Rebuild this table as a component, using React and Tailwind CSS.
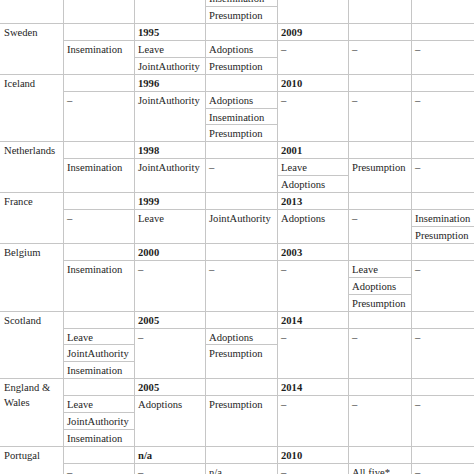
import React from "react";

const SPAN = { 1: "", 2: "row-span-2", 3: "row-span-3", 4: "row-span-4" };

function C({ t = "", s = 1, b = false, first = false }) {
  return (
    <div
      className={`bg-white overflow-hidden pt-px ${first ? "pl-[4px] pr-[2px] whitespace-normal leading-[15px] pt-[1.5px]" : "pl-[3px] whitespace-nowrap"} ${SPAN[s]} ${b ? "font-bold" : ""}`}
    >
      {t}
    </div>
  );
}

function YearRow({ name, span, y1, y2 }) {
  return (
    <>
      <C t={name} s={span} first />
      <C />
      <C t={y1} b />
      <C />
      <C t={y2} b />
      <C />
      <C />
    </>
  );
}

export default function App() {
  return (
    <div className="w-[474px] h-[474px] overflow-hidden bg-white">
      <div
        className="grid grid-cols-[63px_70px_70px_71px_70px_62px_80px] auto-rows-[15.93px] gap-px bg-[#c6c6c6] mt-[-9.93px] text-[10.6px] leading-[16px] text-[#1e1e1e]"
        style={{ fontFamily: '"Liberation Serif", "Times New Roman", serif' }}
      >
        {/* previous block tail */}
        <C s={2} first />
        <C s={2} />
        <C s={2} />
        <C t="Insemination" />
        <C s={2} />
        <C s={2} />
        <C s={2} />
        <C t="Presumption" />

        {/* Sweden */}
        <YearRow name="Sweden" span={3} y1="1995" y2="2009" />
        <C t="Insemination" s={2} />
        <C t="Leave" />
        <C t="Adoptions" />
        <C t="–" s={2} />
        <C t="–" s={2} />
        <C t="–" s={2} />
        <C t="JointAuthority" />
        <C t="Presumption" />

        {/* Iceland */}
        <YearRow name="Iceland" span={4} y1="1996" y2="2010" />
        <C t="–" s={3} />
        <C t="JointAuthority" s={3} />
        <C t="Adoptions" />
        <C t="–" s={3} />
        <C t="–" s={3} />
        <C t="–" s={3} />
        <C t="Insemination" />
        <C t="Presumption" />

        {/* Netherlands */}
        <YearRow name="Netherlands" span={3} y1="1998" y2="2001" />
        <C t="Insemination" s={2} />
        <C t="JointAuthority" s={2} />
        <C t="–" s={2} />
        <C t="Leave" />
        <C t="Presumption" s={2} />
        <C t="–" s={2} />
        <C t="Adoptions" />

        {/* France */}
        <YearRow name="France" span={3} y1="1999" y2="2013" />
        <C t="–" s={2} />
        <C t="Leave" s={2} />
        <C t="JointAuthority" s={2} />
        <C t="Adoptions" s={2} />
        <C t="–" s={2} />
        <C t="Insemination" />
        <C t="Presumption" />

        {/* Belgium */}
        <YearRow name="Belgium" span={4} y1="2000" y2="2003" />
        <C t="Insemination" s={3} />
        <C t="–" s={3} />
        <C t="–" s={3} />
        <C t="–" s={3} />
        <C t="Leave" />
        <C t="–" s={3} />
        <C t="Adoptions" />
        <C t="Presumption" />

        {/* Scotland */}
        <YearRow name="Scotland" span={4} y1="2005" y2="2014" />
        <C t="Leave" />
        <C t="–" s={3} />
        <C t="Adoptions" />
        <C t="–" s={3} />
        <C t="–" s={3} />
        <C t="–" s={3} />
        <C t="JointAuthority" />
        <C t="Presumption" s={2} />
        <C t="Insemination" />

        {/* England & Wales */}
        <YearRow name="England & Wales" span={4} y1="2005" y2="2014" />
        <C t="Leave" />
        <C t="Adoptions" s={3} />
        <C t="Presumption" s={3} />
        <C t="–" s={3} />
        <C t="–" s={3} />
        <C t="–" s={3} />
        <C t="JointAuthority" />
        <C t="Insemination" />

        {/* Portugal */}
        <YearRow name="Portugal" span={3} y1="n/a" y2="2010" />
        <C t="–" s={2} />
        <C t="–" s={2} />
        <C t="n/a" s={2} />
        <C t="–" s={2} />
        <C t="All five*" s={2} />
        <C t="–" s={2} />
      </div>
    </div>
  );
}
